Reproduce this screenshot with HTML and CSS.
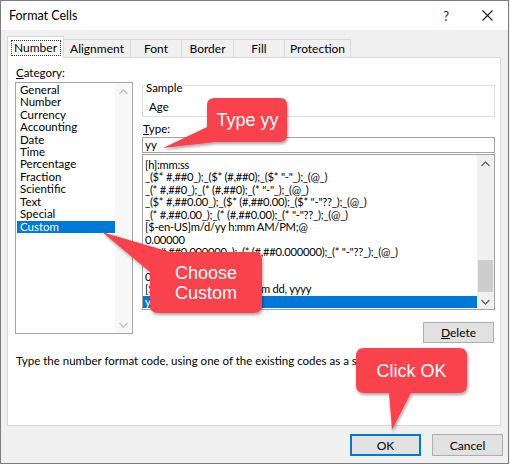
FILE: index.html
```html
<!DOCTYPE html>
<html>
<head>
<meta charset="utf-8">
<link rel="stylesheet" href="styles.css">
</head>
<body>
<div class="dialog">
  <div class="titlebar">
    <span class="title">Format Cells</span>
    <span class="help">?</span>
    <svg class="close" width="11" height="11" viewBox="0 0 11 11"><path d="M0.5 0.5 L10.5 10.5 M10.5 0.5 L0.5 10.5" stroke="#1a1a1a" stroke-width="1.1" fill="none"/></svg>
  </div>
  <div class="body">
    <div class="tabs">
      <div class="tab active w-number"><span class="focus">Number</span></div>
      <div class="tab w-align">Alignment</div>
      <div class="tab w-font">Font</div>
      <div class="tab w-border">Border</div>
      <div class="tab w-fill">Fill</div>
      <div class="tab w-prot">Protection</div>
    </div>
    <div class="panel">
      <div class="cols">
        <div class="catcol">
          <div class="label"><u>C</u>ategory:</div>
          <div class="listbox catlist">
            <div class="items">
              <div class="item">General</div>
              <div class="item">Number</div>
              <div class="item">Currency</div>
              <div class="item">Accounting</div>
              <div class="item">Date</div>
              <div class="item">Time</div>
              <div class="item">Percentage</div>
              <div class="item">Fraction</div>
              <div class="item">Scientific</div>
              <div class="item">Text</div>
              <div class="item">Special</div>
              <div class="item sel">Custom</div>
            </div>
            <div class="scroll">
              <svg width="9" height="6" viewBox="0 0 9 6"><polyline points="0.5,5 4.5,1 8.5,5" stroke="#c2c2c2" stroke-width="1.3" fill="none"/></svg>
              <svg width="9" height="6" viewBox="0 0 9 6"><polyline points="0.5,1 4.5,5 8.5,1" stroke="#c2c2c2" stroke-width="1.3" fill="none"/></svg>
            </div>
          </div>
        </div>
        <div class="rightcol">
          <fieldset class="sample">
            <legend>Sample</legend>
            <div class="sample-val">Age</div>
          </fieldset>
          <div class="label type-label"><u>T</u>ype:</div>
          <div class="typeinput">yy</div>
          <div class="listbox fmtlist">
            <div class="items">
              <div class="item">[h]:mm:ss</div>
              <div class="item">_($* #,##0_);_($* (#,##0);_($* "-"_);_(@_)</div>
              <div class="item">_(* #,##0_);_(* (#,##0);_(* "-"_);_(@_)</div>
              <div class="item">_($* #,##0.00_);_($* (#,##0.00);_($* "-"??_);_(@_)</div>
              <div class="item">_(* #,##0.00_);_(* (#,##0.00);_(* "-"??_);_(@_)</div>
              <div class="item">[$-en-US]m/d/yy h:mm AM/PM;@</div>
              <div class="item">0.00000</div>
              <div class="item">_(* #,##0.000000_);_(* (#,##0.000000);_(* "-"??_);_(@_)</div>
              <div class="item">0.0</div>
              <div class="item">0.000</div>
              <div class="item">[$-x-sysdate]dddd, mmmm dd, yyyy</div>
              <div class="item sel">yy</div>
            </div>
            <div class="scroll fmtscroll">
              <svg width="9" height="6" viewBox="0 0 9 6"><polyline points="0.5,5 4.5,1 8.5,5" stroke="#606060" stroke-width="1.3" fill="none"/></svg>
              <div class="track"><div class="thumb"></div></div>
              <svg width="9" height="6" viewBox="0 0 9 6"><polyline points="0.5,1 4.5,5 8.5,1" stroke="#606060" stroke-width="1.3" fill="none"/></svg>
            </div>
          </div>
          <div class="delrow"><div class="btn"><u>D</u>elete</div></div>
        </div>
      </div>
      <div class="desc">Type the number format code, using one of the existing codes as a starting point.</div>
    </div>
    <div class="buttons">
      <div class="btn ok">OK</div>
      <div class="btn">Cancel</div>
    </div>
  </div>

  <svg class="overlay" width="510" height="464" viewBox="0 0 510 464">
    <defs>
      <filter id="sh" x="-20%" y="-20%" width="140%" height="140%">
        <feDropShadow dx="1" dy="2" stdDeviation="1.6" flood-color="#000" flood-opacity="0.35"/>
      </filter>
    </defs>
    <g filter="url(#sh)" fill="#f9434b">
      <path d="M215 98 H280 Q287 98 287 105 V135 Q287 142 280 142 H216 L163 148 L207 127 V105 Q207 98 215 98 Z"/>
      <path d="M158 252 H254 Q262 252 262 260 V305 Q262 313 254 313 H158 Q150 313 150 305 V272 L102 232 L170 252 Z"/>
      <path d="M364 348 H459 Q467 348 467 356 V385 Q467 393 459 393 H411 L392 430 L389 393 H364 Q356 393 356 385 V356 Q356 348 364 348 Z"/>
    </g>
  </svg>
  <div class="callout c-type">Type yy</div>
  <div class="callout c-custom">Choose<br>Custom</div>
  <div class="callout c-ok">Click OK</div>
</div>
</body>
</html>
```
FILE: styles.css
```css
* { box-sizing: border-box; }
html, body { margin: 0; padding: 0; }
body {
  width: 510px;
  height: 464px;
  overflow: hidden;
  background: #f0f0f0;
  font-family: Lato, "Noto Sans", sans-serif;
  font-size: 11.5px;
  color: #000;
}
.dialog {
  position: relative;
  width: 509px;
  height: 464px;
  border: 1px solid #7d7d7d;
  background: #f0f0f0;
  display: flex;
  flex-direction: column;
}
.titlebar {
  height: 29px;
  background: #fff;
  display: flex;
  align-items: center;
  padding-left: 8px;
}
.title { font-size: 12.5px; flex: 1; }
.help { font-size: 13px; color: #222; margin-right: 33px; }
.close { margin-right: 15px; }

.body {
  flex: 1;
  padding: 6px 5px 0 6px;
  display: flex;
  flex-direction: column;
}
.tabs {
  display: flex;
  align-items: flex-end;
  height: 21px;
  position: relative;
  z-index: 1;
}
.tab {
  height: 18px;
  border: 1px solid #d9d9d9;
  border-bottom: none;
  background: #f0f0f0;
  margin-left: -1px;
  display: flex;
  align-items: center;
  justify-content: center;
  font-size: 12px;
}
.tab.active {
  height: 22px;
  margin-left: 0;
  margin-bottom: -1px;
  background: #fff;
}
.focus {
  border: 1px dotted #333;
  padding: 0 2px;
  line-height: 14px;
  width: 50px;
  text-align: center;
}
.w-number { width: 57px; }
.w-align { width: 68px; }
.w-font { width: 52px; }
.w-border { width: 53px; }
.w-fill { width: 52px; }
.w-prot { width: 67px; }

.panel {
  width: 494px;
  height: 369px;
  background: #fff;
  border: 1px solid #d9d9d9;
  padding: 8px 0 0 7px;
}
.cols { display: flex; gap: 9px; }
.catcol { width: 118px; }
.label { line-height: 14px; padding-left: 1px; height: 14px; }
.listbox {
  border: 1px solid #a3a3a3;
  display: flex;
  background: #fff;
}
.catlist {
  margin-top: 2px;
  height: 252px;
}
.items { flex: 1; padding-top: 1px; overflow: hidden; }
.item {
  height: 12.45px;
  line-height: 12.45px;
  padding-left: 3px;
  white-space: nowrap;
}
.item.sel { background: #0078d7; color: #fff; }
.catlist .items { padding-left: 1px; padding-top: 0.8px; }
.scroll {
  width: 17px;
  background: #f7f7f7;
  display: flex;
  flex-direction: column;
  align-items: center;
  justify-content: space-between;
  padding: 6px 0 5px;
}
.rightcol { width: 353px; }
.sample {
  margin: 9px 0 0 0;
  border: 1px solid #dcdcdc;
  padding: 0 6px 2px 6px;
}
.sample legend {
  padding: 6px 1px 0 1px;
  margin-left: -4px;
  line-height: 14px;
}
.sample-val { line-height: 14px; margin-top: 5px; }
.type-label { margin-top: 5px; }
.typeinput {
  margin-top: 1px;
  height: 16px;
  border: 1px solid #a3a3a3;
  line-height: 14px;
  padding-left: 2px;
}
.fmtlist {
  margin-top: 1px;
  height: 156px;
}
.fmtlist .items { padding-top: 4px; }
.fmtlist .item { padding-left: 2px; font-size: 11.2px; letter-spacing: -0.25px; }
.fmtscroll {
  width: 17px;
  background: #f0f0f0;
  padding: 6px 0 4px;
}
.track {
  flex: 1;
  width: 100%;
  display: flex;
  flex-direction: column;
  justify-content: flex-end;
  padding: 0 1px 7px 1px;
}
.thumb { height: 32px; background: #cdcdcd; }
.delrow { display: flex; justify-content: flex-end; margin-top: 12px; padding-right: 1px; }
.btn {
  width: 71px;
  height: 21px;
  background: #e1e1e1;
  border: 1px solid #adadad;
  display: flex;
  align-items: center;
  justify-content: center;
  font-size: 12px;
}
.desc { margin-top: 11px; line-height: 14px; padding-left: 1px; white-space: nowrap; }
.buttons {
  display: flex;
  justify-content: flex-end;
  gap: 11px;
  margin-top: 8px;
  padding-right: 0;
}
.buttons .btn { height: 22px; }
.btn.ok { border: 2px solid #0078d7; }

.overlay { position: absolute; left: -1px; top: -1px; pointer-events: none; }
.callout {
  position: absolute;
  color: #fff;
  font-family: "Liberation Sans", Arial, sans-serif;
  font-size: 18px;
  line-height: 20px;
  display: flex;
  align-items: center;
  justify-content: center;
  text-align: center;
}
.c-type { left: 207px; top: 97px; width: 79px; height: 44px; }
.c-custom { left: 149px; top: 251px; width: 112px; height: 61px; }
.c-ok { left: 355px; top: 347px; width: 111px; height: 45px; }
```
